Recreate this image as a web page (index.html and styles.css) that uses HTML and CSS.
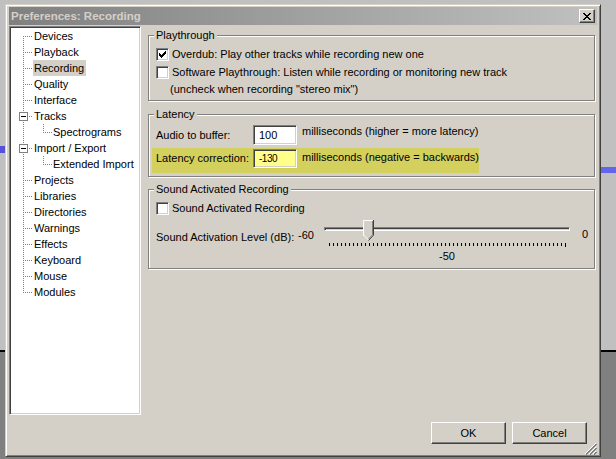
FILE: index.html
```html
<!DOCTYPE html>
<html>
<head>
<meta charset="utf-8">
<title>Preferences: Recording</title>
<link rel="stylesheet" href="styles.css">
</head>
<body>
<div class="dialog">
  <div class="titlebar">
    <span class="title">Preferences: Recording</span>
    <span class="close"><svg width="8" height="7" viewBox="0 0 8 7" shape-rendering="crispEdges"><path fill="#000" d="M0 0h2v1h-2z M6 0h2v1h-2z M1 1h2v1h-2z M5 1h2v1h-2z M2 2h4v1h-4z M3 3h2v1h-2z M2 4h4v1h-4z M1 5h2v1h-2z M5 5h2v1h-2z M0 6h2v1h-2z M6 6h2v1h-2z"/></svg></span>
  </div>
  <div class="main">
    <div class="tree">
      <div class="row"><span class="g first"></span><span class="t">Devices</span></div>
      <div class="row"><span class="g"></span><span class="t">Playback</span></div>
      <div class="row"><span class="g"></span><span class="t sel">Recording</span></div>
      <div class="row"><span class="g"></span><span class="t">Quality</span></div>
      <div class="row"><span class="g"></span><span class="t">Interface</span></div>
      <div class="row"><span class="g"><span class="box"></span></span><span class="t">Tracks</span></div>
      <div class="row"><span class="g v"></span><span class="sp"></span><span class="g2"></span><span class="t">Spectrograms</span></div>
      <div class="row"><span class="g"><span class="box"></span></span><span class="t">Import / Export</span></div>
      <div class="row"><span class="g v"></span><span class="sp"></span><span class="g2"></span><span class="t">Extended Import</span></div>
      <div class="row"><span class="g"></span><span class="t">Projects</span></div>
      <div class="row"><span class="g"></span><span class="t">Libraries</span></div>
      <div class="row"><span class="g"></span><span class="t">Directories</span></div>
      <div class="row"><span class="g"></span><span class="t">Warnings</span></div>
      <div class="row"><span class="g"></span><span class="t">Effects</span></div>
      <div class="row"><span class="g"></span><span class="t">Keyboard</span></div>
      <div class="row"><span class="g"></span><span class="t">Mouse</span></div>
      <div class="row"><span class="g last"></span><span class="t">Modules</span></div>
    </div>
    <div class="panel">
      <fieldset class="group g-play">
        <legend>Playthrough</legend>
        <div class="gbody">
          <div class="crow"><span class="cb"><svg width="7" height="7" viewBox="0 0 7 7" shape-rendering="crispEdges"><path fill="#000" d="M6 0h1v1h-1z M5 1h2v1h-2z M0 2h1v1h-1z M4 2h3v1h-3z M0 3h2v1h-2z M3 3h3v1h-3z M0 4h5v1h-5z M1 5h3v1h-3z M2 6h1v1h-1z"/></svg></span><span>Overdub: Play other tracks while recording new one</span></div>
          <div class="crow"><span class="cb"></span><span>Software Playthrough: Listen while recording or monitoring new track</span></div>
          <div class="note">(uncheck when recording "stereo mix")</div>
        </div>
      </fieldset>
      <fieldset class="group g-lat">
        <legend>Latency</legend>
        <div class="gbody">
          <div class="lrow">
            <span class="llabel">Audio to buffer:</span>
            <span class="input">100</span>
            <span class="lunit">milliseconds (higher = more latency)</span>
          </div>
          <div class="lrow band">
            <span class="llabel">Latency correction:</span>
            <span class="input hl">-130</span>
            <span class="lunit">milliseconds (negative = backwards)</span>
          </div>
        </div>
      </fieldset>
      <fieldset class="group g-sound">
        <legend>Sound Activated Recording</legend>
        <div class="gbody">
          <div class="crow short"><span class="cb"></span><span>Sound Activated Recording</span></div>
          <div class="srow">
            <span class="slabel">Sound Activation Level (dB):</span>
            <span class="smin">-60</span>
            <div class="slider">
              <div class="track"></div>
              <div class="ticks"></div>
              <div class="sval">-50</div>
              <svg class="thumb" width="11" height="21" viewBox="0 0 11 21">
                <polygon points="0,0 11,0 11,15 5.5,20.5 0,15" fill="#d4d0c8"/>
                <path d="M0.5 15.5 V0.5 H10" stroke="#fff" fill="none"/>
                <path d="M0.5 15 L5.5 20" stroke="#fff" fill="none"/>
                <path d="M10.5 0 V15.2 L5.5 20.5" stroke="#404040" fill="none"/>
                <path d="M9.5 1 V14.8 L5.5 19" stroke="#808080" fill="none"/>
              </svg>
            </div>
            <span class="smax">0</span>
          </div>
        </div>
      </fieldset>
    </div>
  </div>
  <div class="footer">
    <button class="btn">OK</button>
    <button class="btn">Cancel</button>
  </div>
  <svg class="grip" width="12" height="12" viewBox="0 0 12 12" shape-rendering="crispEdges">
    <path d="M11 0 L0 11" stroke="#fff"/>
    <path d="M11 1 L1 11 M12 1 L1 12" stroke="#808080"/>
    <path d="M11 4 L4 11" stroke="#fff"/>
    <path d="M11 5 L5 11 M12 5 L5 12" stroke="#808080"/>
    <path d="M11 8 L8 11" stroke="#fff"/>
    <path d="M11 9 L9 11 M12 9 L9 12" stroke="#808080"/>
  </svg>
</div>
</body>
</html>
```
FILE: styles.css
```css
* { box-sizing: border-box; }
html, body { margin: 0; padding: 0; }
body {
  width: 616px;
  height: 459px;
  overflow: hidden;
  padding: 4px 0 0 5px;
  font-family: "Liberation Sans", Arial, sans-serif;
  font-size: 11px;
  color: #000;
  background:
    linear-gradient(#5252dc, #5252dc) 0 146px / 5px 7px no-repeat,
    linear-gradient(#6464ec, #6464ec) 601px 167px / 15px 6px no-repeat,
    linear-gradient(to bottom, #c0c0c0 350px, #000 350px, #000 352px, #808080 352px) 0 0 / 100% 100% no-repeat;
}

.dialog {
  position: relative;
  width: 596px;
  height: 453px;
  background: #d4d0c8;
  border: 1px solid;
  border-color: #d4d0c8 #404040 #404040 #d4d0c8;
  box-shadow: inset 1px 1px #fff, inset -1px -1px #808080;
  padding: 2px 3px 3px 3px;
  display: flex;
  flex-direction: column;
}

.titlebar {
  height: 18px;
  flex: none;
  display: flex;
  align-items: center;
  justify-content: space-between;
  padding: 0 2px;
  background: linear-gradient(to right, #808080, #c0c0c0);
}
.title {
  font-weight: bold;
  font-size: 11.5px;
  color: #d4d0c8;
}
.close {
  width: 16px;
  height: 14px;
  background: #d4d0c8;
  border: 1px solid;
  border-color: #fff #404040 #404040 #fff;
  box-shadow: inset -1px -1px #808080;
  display: flex;
  align-items: center;
  justify-content: center;
  padding-right: 1px;
}
.close svg { display: block; }

.main {
  display: flex;
  gap: 7px;
  margin-top: 1px;
  height: 389px;
  flex: none;
}

/* tree */
.tree {
  width: 132px;
  height: 389px;
  flex: none;
  background: #fff;
  border: 1px solid;
  border-color: #808080 #fff #fff #808080;
  box-shadow: inset 1px 1px #404040, inset -1px -1px #d4d0c8;
  padding-top: 1px;
}
.row {
  display: flex;
  height: 16px;
  padding-left: 8px;
}
.g, .g2 {
  flex: none;
  height: 16px;
  display: flex;
  align-items: center;
}
.g {
  width: 15px;
  background:
    repeating-linear-gradient(to right, #808080 0 1px, transparent 1px 2px) 5px 8px / 10px 1px no-repeat,
    repeating-linear-gradient(to bottom, #808080 0 1px, transparent 1px 2px) 5px 0 / 1px 16px no-repeat;
}
.g.first {
  background:
    repeating-linear-gradient(to right, #808080 0 1px, transparent 1px 2px) 5px 8px / 10px 1px no-repeat,
    repeating-linear-gradient(to bottom, #808080 0 1px, transparent 1px 2px) 5px 8px / 1px 8px no-repeat;
}
.g.last {
  background:
    repeating-linear-gradient(to right, #808080 0 1px, transparent 1px 2px) 5px 8px / 10px 1px no-repeat,
    repeating-linear-gradient(to bottom, #808080 0 1px, transparent 1px 2px) 5px 0 / 1px 9px no-repeat;
}
.g.v {
  background:
    repeating-linear-gradient(to bottom, #808080 0 1px, transparent 1px 2px) 5px 0 / 1px 16px no-repeat;
}
.sp { width: 5px; flex: none; }
.g2 {
  width: 14px;
  background:
    repeating-linear-gradient(to right, #808080 0 1px, transparent 1px 2px) 5px 8px / 9px 1px no-repeat,
    repeating-linear-gradient(to bottom, #808080 0 1px, transparent 1px 2px) 5px 0 / 1px 9px no-repeat;
}
.box {
  width: 9px;
  height: 9px;
  margin-left: 1px;
  margin-top: 1px;
  border: 1px solid #808080;
  background: #fff linear-gradient(#000, #000) center / 5px 1px no-repeat;
}
.t {
  line-height: 16px;
  padding: 0 2px 0 1px;
  white-space: nowrap;
}
.t.sel { background: #d4d0c8; }

/* right panel */
.panel {
  width: 447px;
  flex: none;
  display: flex;
  flex-direction: column;
}
.group {
  margin: 0;
  min-width: 0;
  border: 1px solid #808080;
  box-shadow: inset 1px 1px #fff, 1px 1px #fff;
  padding: 0 0 3px 5px;
}
.group legend {
  padding: 0 2px;
  line-height: 14px;
  background: #d4d0c8;
}
.gbody { padding-left: 2px; }

.g-play { margin-top: 2px; }
.g-play .gbody { padding-top: 3px; }
.g-lat { margin-top: 6px; }
.g-lat .gbody { padding-top: 4px; }
.g-sound { margin-top: 5px; padding-bottom: 4px; }
.g-sound .gbody { padding-top: 5px; }

.crow {
  display: flex;
  align-items: center;
  gap: 3px;
  height: 18px;
  white-space: nowrap;
}
.crow.short { height: 14px; }
.cb {
  width: 13px;
  height: 13px;
  flex: none;
  background: #fff;
  border: 1px solid;
  border-color: #808080 #fff #fff #808080;
  box-shadow: inset 1px 1px #404040, inset -1px -1px #d4d0c8;
  display: flex;
  align-items: center;
  justify-content: center;
}
.cb svg { display: block; }
.note {
  height: 16px;
  line-height: 16px;
  padding-left: 14px;
}

.lrow {
  display: flex;
  align-items: center;
  height: 20px;
  white-space: nowrap;
}
.llabel { width: 97px; flex: none; }
.input {
  width: 44px;
  height: 20px;
  flex: none;
  background: #fff;
  border: 1px solid;
  border-color: #808080 #fff #fff #808080;
  box-shadow: inset 1px 1px #404040, inset -1px -1px #d4d0c8;
  padding-left: 5px;
  display: flex;
  align-items: center;
}
.lunit {
  margin-left: 5px;
  align-self: flex-start;
  line-height: 13px;
}
.band {
  margin: 3px 0 0 -4px;
  padding: 1px 0 5px 4px;
  height: 25px;
  width: 327px;
  align-items: flex-start;
  background: #d4d05e;
}
.band .llabel { margin-top: 3px; }
.band .lunit { margin-top: 2px; }
.input.hl {
  height: 19px;
  background: #ffff8a;
  font-size: 10px;
  letter-spacing: -0.5px;
}

.srow {
  display: flex;
  align-items: flex-start;
  height: 46px;
  margin-top: 3px;
  white-space: nowrap;
}
.slabel { width: 142px; flex: none; margin-top: 13px; line-height: 13px; }
.smin { width: 26px; flex: none; margin-top: 11px; line-height: 13px; }
.slider {
  position: relative;
  width: 246px;
  height: 46px;
  flex: none;
}
.track {
  margin-top: 9px;
  height: 4px;
  border: 1px solid;
  border-color: #808080 #fff #fff #808080;
  box-shadow: inset 1px 1px #404040, inset -1px -1px #d4d0c8;
}
.ticks {
  margin: 12px 0 0 5px;
  width: 237px;
  height: 4px;
  background:
    linear-gradient(#000, #000) 236px 0 / 1px 4px no-repeat,
    linear-gradient(to right, #000 1px, transparent 1px) 0 0 / 4px 3px repeat-x;
}
.sval {
  margin-top: 3px;
  line-height: 13px;
  text-align: center;
}
.thumb {
  position: absolute;
  left: 39px;
  top: 2px;
  display: block;
}
.smax { margin-left: 12px; margin-top: 10px; line-height: 13px; }

/* footer */
.footer {
  display: flex;
  justify-content: flex-end;
  gap: 6px;
  padding: 7px 10px 0 0;
}
.btn {
  width: 75px;
  height: 22px;
  padding: 0;
  font: inherit;
  color: #000;
  background: #d4d0c8;
  border: 1px solid;
  border-color: #fff #404040 #404040 #fff;
  box-shadow: inset -1px -1px #808080;
}
.grip {
  position: absolute;
  right: 3px;
  bottom: 1px;
  display: block;
}
```
